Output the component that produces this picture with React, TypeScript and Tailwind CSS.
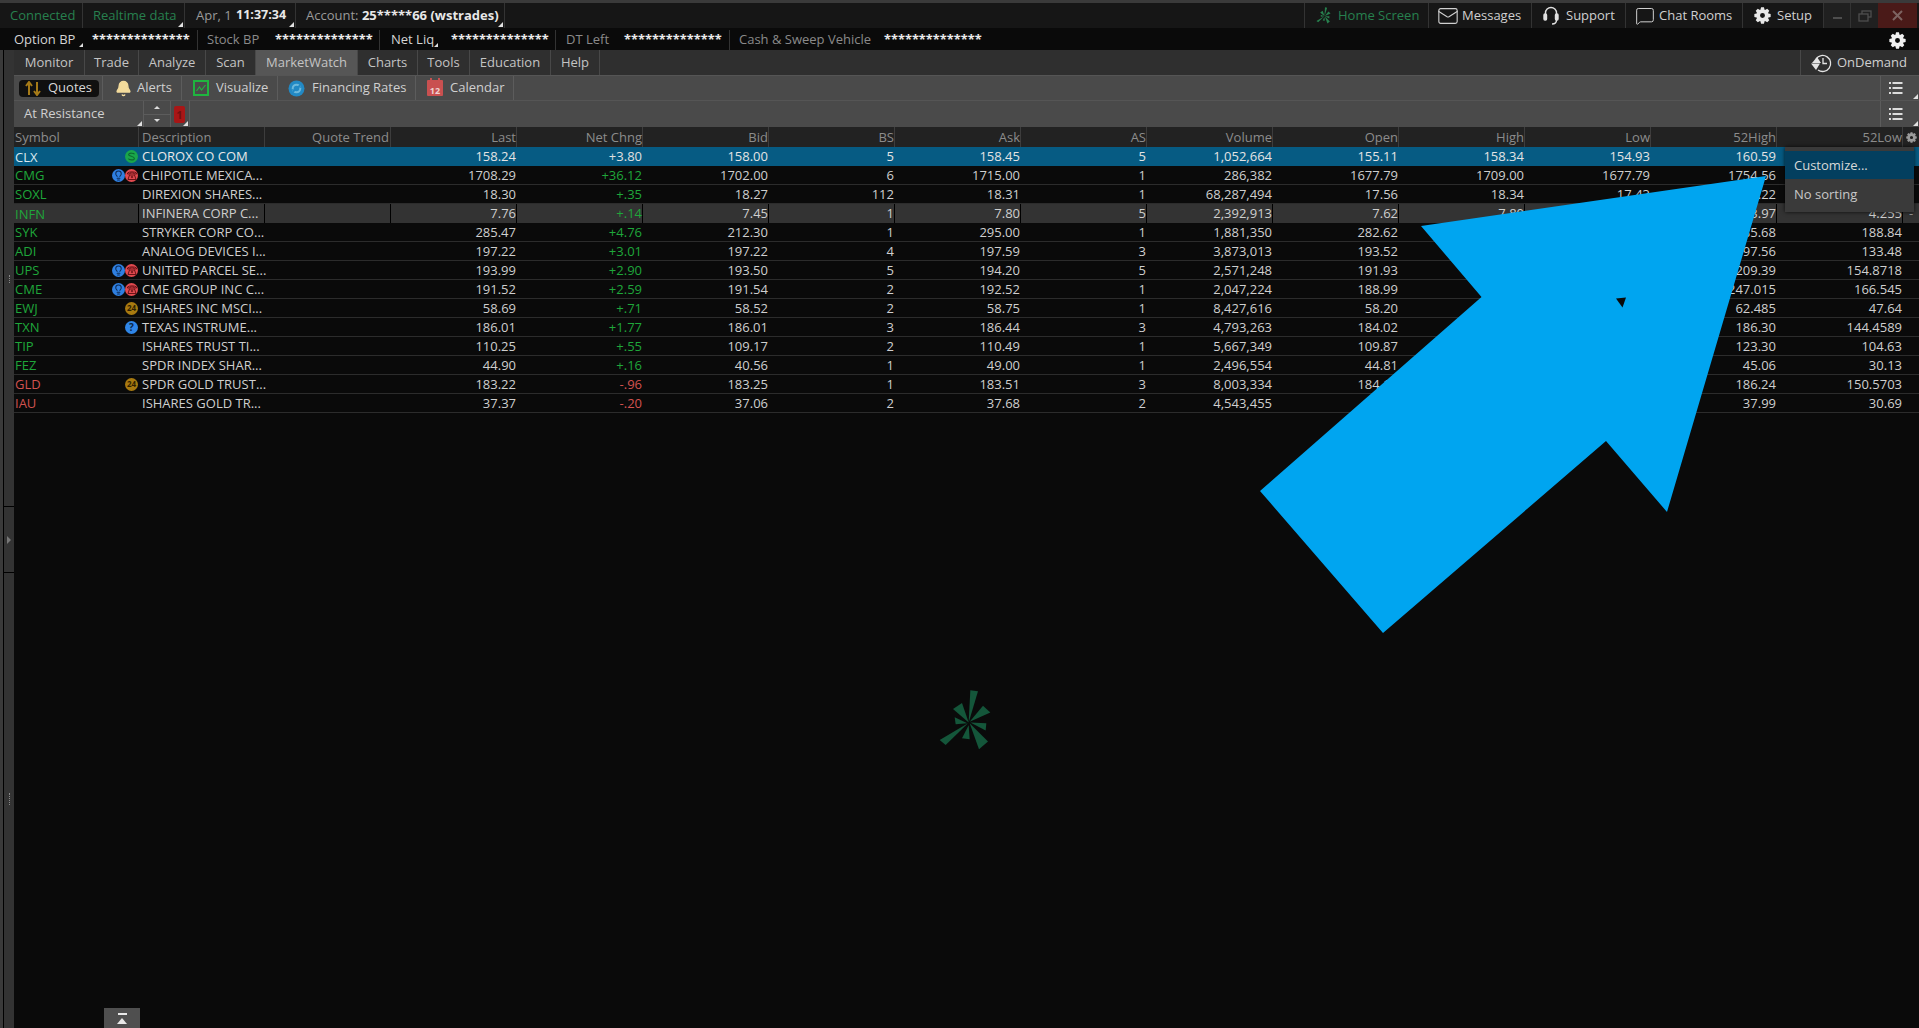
import React from "react";
import { Mail, MessageSquare, Bell, Lightbulb } from "lucide-react";

const Gear = ({ s = 16, c = "#e8e8e8" }: { s?: number; c?: string }) => (
  <svg width={s} height={s} viewBox="0 0 24 24" className="shrink-0">
    <g fill={c}>
      {[0, 45, 90, 135, 180, 225, 270, 315].map((a) => (
        <path key={a} d="M10 0.5h4l2 7h-8z" transform={`rotate(${a} 12 12)`} />
      ))}
    </g>
    <circle cx="12" cy="12" r="6" fill="none" stroke={c} strokeWidth="5" />
  </svg>
);

const Burst = ({ w, h, c }: { w: number; h: number; c: string }) => (
  <svg width={w} height={h} viewBox="55 58 162 185" preserveAspectRatio="none" className="shrink-0">
    <g fill={c}>
      <polygon points="147,158 152,62 175,65" />
      <polygon points="147,158 100,118 127,100" />
      <polygon points="143,160 105,142 108,163" />
      <polygon points="145,160 60,210 78,225" />
      <polygon points="147,166 127,205 150,208" />
      <polygon points="150,160 178,238 205,215" />
      <polygon points="152,158 200,160 198,182" />
      <polygon points="150,156 190,108 212,128" />
    </g>
  </svg>
);

const Corner = () => (
  <span className="absolute right-[1px] bottom-[1px] w-0 h-0 border-l-[5px] border-l-transparent border-b-[5px] border-b-[#e0e0e0]" />
);

const Stars = () => <span className="font-bold text-[#ececec] text-[12.8px]">**************</span>;

const ListBtn = () => (
  <div className="relative w-[39px] h-full border-l border-[#5c5c5c] flex items-center justify-center pr-[8px]">
    <svg width="14" height="14" viewBox="0 0 14 14" fill="#dcdcdc">
      <rect x="0" y="1" width="2" height="2" />
      <rect x="3.5" y="1" width="10" height="2" />
      <rect x="0" y="6" width="2" height="2" />
      <rect x="3.5" y="6" width="10" height="2" />
      <rect x="0" y="11" width="2" height="2" />
      <rect x="3.5" y="11" width="10" height="2" />
    </svg>
    <Corner />
  </div>
);

type Badge = "s" | "bulb" | "phone" | "24" | "q";
const Circle = ({ b }: { b: Badge }) => {
  if (b === "s")
    return (
      <span className="w-[13px] h-[13px] rounded-full bg-[#1aa64b] flex items-center justify-center">
        <svg width="9" height="9" viewBox="0 0 9 9" fill="none" stroke="#0c6a30" strokeWidth="1.1">
          <path d="M7.5 2.2C7 1 2 0.6 1.6 2.4c-.4 2 5.8 1.8 5.8 4 0 2-5.5 1.8-6 .3" />
        </svg>
      </span>
    );
  if (b === "bulb")
    return (
      <span className="w-[13px] h-[13px] rounded-full bg-[#2f7fe0] flex items-center justify-center">
        <Lightbulb size={11} color="#0c2c58" strokeWidth={2.2} />
      </span>
    );
  if (b === "phone")
    return (
      <span className="w-[13px] h-[13px] rounded-full bg-[#e24a4f] flex items-center justify-center">
        <svg width="10" height="9" viewBox="0 0 10 9" fill="none" stroke="#6a1216" strokeWidth="1">
          <path d="M0.5 3V2C2 0.5 8 0.5 9.5 2v1H7V2H3v1z" />
          <path d="M2.5 4h5l1.5 4.5H1z" />
          <circle cx="5" cy="6" r="0.8" />
        </svg>
      </span>
    );
  if (b === "24")
    return (
      <span className="w-[13px] h-[13px] rounded-full bg-[#a87a10] flex items-center justify-center text-[8px] leading-none text-[#2e2000] font-bold">
        24
      </span>
    );
  return (
    <span className="w-[13px] h-[13px] rounded-full bg-[#2f86e8] flex items-center justify-center text-[10px] leading-none text-[#0b2344] font-bold">
      ?
    </span>
  );
};

type Row = {
  sym: string;
  badges: Badge[];
  desc: string;
  v: string[];
  red?: boolean;
};

const rows: Row[] = [
  { sym: "CLX", badges: ["s"], desc: "CLOROX CO COM", v: ["158.24", "+3.80", "158.00", "5", "158.45", "5", "1,052,664", "155.11", "158.34", "154.93", "160.59", ""] },
  { sym: "CMG", badges: ["bulb", "phone"], desc: "CHIPOTLE MEXICA...", v: ["1708.29", "+36.12", "1702.00", "6", "1715.00", "1", "286,382", "1677.79", "1709.00", "1677.79", "1754.56", ""] },
  { sym: "SOXL", badges: [], desc: "DIREXION SHARES...", v: ["18.30", "+.35", "18.27", "112", "18.31", "1", "68,287,494", "17.56", "18.34", "17.43", "34.22", ""] },
  { sym: "INFN", badges: [], desc: "INFINERA CORP C...", v: ["7.76", "+.14", "7.45", "1", "7.80", "5", "2,392,913", "7.62", "7.80", "", "13.97", "4.255"] },
  { sym: "SYK", badges: [], desc: "STRYKER CORP CO...", v: ["285.47", "+4.76", "212.30", "1", "295.00", "1", "1,881,350", "282.62", "", "", "285.68", "188.84"] },
  { sym: "ADI", badges: [], desc: "ANALOG DEVICES I...", v: ["197.22", "+3.01", "197.22", "4", "197.59", "3", "3,873,013", "193.52", "", "", "197.56", "133.48"] },
  { sym: "UPS", badges: ["bulb", "phone"], desc: "UNITED PARCEL SE...", v: ["193.99", "+2.90", "193.50", "5", "194.20", "5", "2,571,248", "191.93", "", "", "209.39", "154.8718"] },
  { sym: "CME", badges: ["bulb", "phone"], desc: "CME GROUP INC C...", v: ["191.52", "+2.59", "191.54", "2", "192.52", "1", "2,047,224", "188.99", "", "", "247.015", "166.545"] },
  { sym: "EWJ", badges: ["24"], desc: "ISHARES INC MSCI...", v: ["58.69", "+.71", "58.52", "2", "58.75", "1", "8,427,616", "58.20", "", "", "62.485", "47.64"] },
  { sym: "TXN", badges: ["q"], desc: "TEXAS INSTRUME...", v: ["186.01", "+1.77", "186.01", "3", "186.44", "3", "4,793,263", "184.02", "", "", "186.30", "144.4589"] },
  { sym: "TIP", badges: [], desc: "ISHARES TRUST TI...", v: ["110.25", "+.55", "109.17", "2", "110.49", "1", "5,667,349", "109.87", "", "", "123.30", "104.63"] },
  { sym: "FEZ", badges: [], desc: "SPDR INDEX SHAR...", v: ["44.90", "+.16", "40.56", "1", "49.00", "1", "2,496,554", "44.81", "", "", "45.06", "30.13"] },
  { sym: "GLD", badges: ["24"], desc: "SPDR GOLD TRUST...", v: ["183.22", "-.96", "183.25", "1", "183.51", "3", "8,003,334", "184.10", "", "", "186.24", "150.5703"], red: true },
  { sym: "IAU", badges: [], desc: "ISHARES GOLD TR...", v: ["37.37", "-.20", "37.06", "2", "37.68", "2", "4,543,455", "", "", "", "37.99", "30.69"], red: true },
];

const headers = ["Last", "Net Chng", "Bid", "BS", "Ask", "AS", "Volume", "Open", "High", "Low", "52High", "52Low"];
const gridCols = "grid grid-cols-[125px_repeat(14,126px)_16px]";

const TopCell = ({ children, className = "" }: { children: React.ReactNode; className?: string }) => (
  <div className={`relative h-full flex items-center border-r border-[#333] ${className}`}>{children}</div>
);

const Tab = ({ t, w, active }: { t: string; w: string; active?: boolean }) => (
  <div className={`h-full flex items-center justify-center border-r border-[#484848] text-[#c4c4c4] ${w} ${active ? "bg-[#565656]" : ""}`}>{t}</div>
);

const SubTab = ({ icon, t, className }: { icon: React.ReactNode; t: string; className: string }) => (
  <div className={`h-full flex items-center border-r border-[#5c5c5c] text-[#d0d0d0] ${className}`}>
    {icon}
    <span>{t}</span>
  </div>
);

export default function App() {
  return (
    <div className="relative h-screen w-full overflow-hidden bg-[#0a0a0a] font-['Open_Sans',sans-serif] text-[13px] text-[#cfcfcf] flex flex-col whitespace-nowrap">
      {/* top strip */}
      <div className="h-[3px] shrink-0 bg-[#3a3a3a]" />
      <div className="h-[25px] shrink-0 bg-[#161616] flex items-center">
        <TopCell className="w-[83px] pl-[10px] text-[#27804e]">Connected</TopCell>
        <TopCell className="w-[102px] pl-[10px] text-[#27804e]">
          Realtime data
          <Corner />
        </TopCell>
        <TopCell className="w-[111px] pl-[11px] text-[#9a9a9a]">
          Apr, 1&nbsp;<b className="ml-[1px] text-[12.5px] text-[#e8e8e8]">11:37:34</b>
          <Corner />
        </TopCell>
        <TopCell className="w-[209px] pl-[10px] text-[#9a9a9a]">
          Account:&nbsp;<b className="text-[#e8e8e8]">25*****66 (wstrades)</b>
          <Corner />
        </TopCell>
        <div className="flex-1" />
        <div className="h-full flex items-center w-[125px] border-x border-[#333] pl-[11px] gap-[7px] text-[#27804e]">
          <Burst w={15} h={17} c="#27804e" />
          Home Screen
        </div>
        <div className="h-full flex items-center w-[103px] border-r border-[#333] pl-[8px] gap-[3px] text-[#d0d0d0]">
          <Mail size={22} strokeWidth={1.2} />
          Messages
        </div>
        <div className="h-full flex items-center w-[94px] border-r border-[#333] pl-[11px] gap-[7px] text-[#d0d0d0]">
          <svg width="16" height="20" viewBox="0 0 16 20" fill="none" stroke="#e0e0e0" strokeWidth="1.4">
            <path d="M2.5 10V7a5.5 5.5 0 0 1 11 0v3" />
            <rect x="1" y="8" width="2.5" height="6" rx="1" fill="#e0e0e0" />
            <rect x="12.5" y="8" width="2.5" height="6" rx="1" fill="#e0e0e0" />
            <path d="M13.5 14c0 3-2 4-4.5 4" />
          </svg>
          Support
        </div>
        <div className="h-full flex items-center w-[117px] border-r border-[#333] pl-[9px] gap-[4px] text-[#d0d0d0]">
          <MessageSquare size={20} strokeWidth={1.2} />
          Chat Rooms
        </div>
        <div className="h-full flex items-center w-[81px] border-r border-[#333] pl-[11px] gap-[6px] text-[#d0d0d0]">
          <Gear s={17} />
          Setup
        </div>
        <div className="h-full w-[27px] bg-[#202020] flex items-center justify-center border-r border-[#333]">
          <div className="w-[9px] h-[2px] bg-[#4e4e4e] mt-[5px]" />
        </div>
        <div className="h-full w-[27px] bg-[#202020] flex items-center justify-center">
          <svg width="14" height="12" viewBox="0 0 14 12" fill="none" stroke="#4e4e4e" strokeWidth="1.3">
            <rect x="4" y="1" width="9" height="6" />
            <rect x="1" y="4" width="9" height="7" fill="#202020" />
          </svg>
        </div>
        <div className="h-full w-[39px] bg-[#4a1a18] flex items-center justify-center">
          <svg width="11" height="11" viewBox="0 0 11 11" stroke="#7d6461" strokeWidth="2">
            <path d="M1 1l9 9M10 1l-9 9" />
          </svg>
        </div>
        <div className="w-[2px]" />
      </div>
      {/* balances */}
      <div className="h-[22px] shrink-0 bg-[#0a0a0a] flex items-center text-[#d4d4d4] pt-[2px]">
        <div className="relative h-full w-[198px] border-r border-[#333] flex items-center pl-[14px]">
          <span className="w-[78px]">Option BP</span>
          <Stars />
          <span className="absolute left-[79px] bottom-[3px] w-0 h-0 border-l-[4px] border-l-transparent border-b-[4px] border-b-[#e0e0e0]" />
        </div>
        <div className="h-full w-[182px] border-r border-[#333] flex items-center pl-[9px] text-[#8a8a8a]">
          <span className="w-[68px]">Stock BP</span>
          <Stars />
        </div>
        <div className="relative h-full w-[176px] border-r border-[#333] flex items-center pl-[11px]">
          <span className="w-[60px]">Net Liq</span>
          <Stars />
          <span className="absolute left-[54px] bottom-[3px] w-0 h-0 border-l-[4px] border-l-transparent border-b-[4px] border-b-[#e0e0e0]" />
        </div>
        <div className="h-full w-[174px] border-r border-[#333] flex items-center pl-[10px] text-[#8a8a8a]">
          <span className="w-[58px]">DT Left</span>
          <Stars />
        </div>
        <div className="h-full flex items-center pl-[9px] text-[#8a8a8a]">
          <span className="w-[145px]">Cash &amp; Sweep Vehicle</span>
          <Stars />
        </div>
        <div className="flex-1" />
        <div className="w-[44px] flex justify-center">
          <Gear s={17} c="#f0f0f0" />
        </div>
      </div>
      {/* body */}
      <div className="flex-1 min-h-0 flex">
        <div className="w-[14px] shrink-0 flex">
          <div className="w-[3px] bg-[#3a3a3a]" />
          <div className="w-[1px] bg-black" />
          <div className="w-[10px] bg-[#333] flex flex-col items-center">
            <div className="h-[225px] shrink-0" />
            <div className="h-[8px] w-[1px] shrink-0 border-l border-dotted border-[#888]" />
            <div className="h-[223px] shrink-0" />
            <div className="h-[1px] w-full shrink-0 bg-black" />
            <div className="h-[65px] shrink-0 flex items-center justify-center">
              <span className="w-0 h-0 border-y-[4px] border-y-transparent border-l-[4px] border-l-[#777]" />
            </div>
            <div className="h-[1px] w-full shrink-0 bg-black" />
            <div className="h-[220px] shrink-0" />
            <div className="h-[12px] w-[1px] shrink-0 border-l border-dotted border-[#888]" />
          </div>
        </div>
        <div className="flex-1 min-w-0 flex flex-col">
          <div className="h-[25px] shrink-0 bg-[#2f2f2f] flex items-center">
            <Tab t="Monitor" w="w-[71px]" />
            <Tab t="Trade" w="w-[54px]" />
            <Tab t="Analyze" w="w-[67px]" />
            <Tab t="Scan" w="w-[50px]" />
            <Tab t="MarketWatch" w="w-[102px]" active />
            <Tab t="Charts" w="w-[60px]" />
            <Tab t="Tools" w="w-[52px]" />
            <Tab t="Education" w="w-[81px]" />
            <Tab t="Help" w="w-[49px]" />
            <div className="flex-1" />
            <div className="h-full w-[117px] border-l border-[#484848] flex items-center pl-[10px] gap-[5px] text-[#d0d0d0]">
              <svg width="21" height="22" viewBox="0 0 21 22" fill="none" stroke="#e4e4e4" strokeWidth="1.3">
                <path d="M5 7a8 8 0 1 1 2 11" />
                <path d="M12 6v5.5h4" />
                <path d="M0 11.5h9l-4 6.5z" fill="#e4e4e4" stroke="none" />
                <path d="M6 5l4 6H1z" fill="#e4e4e4" stroke="none" />
              </svg>
              OnDemand
            </div>
            <div className="w-[2px]" />
          </div>
          <div className="h-[25px] shrink-0 bg-[#4a4a4a] border-t border-[#555] flex items-center">
            <div className="h-full w-[89px] flex items-center pl-[5px] border-r border-[#5c5c5c]">
              <div className="h-[17px] w-[80px] rounded-[4px] bg-[#101010] flex items-center pl-[6px] gap-[7px] text-[#d8d8d8]">
                <svg width="16" height="15" viewBox="0 0 16 15" fill="none" stroke="#a57a18" strokeWidth="2">
                  <path d="M4 14V2M1 5l3-4 3 4" />
                  <path d="M12 1v12M9 10l3 4 3-4" />
                </svg>
                Quotes
              </div>
            </div>
            <SubTab
              className="w-[79px] pl-[12px] gap-[5px]"
              t="Alerts"
              icon={<Bell size={17} color="#f4dc9c" fill="#f4dc9c" />}
            />
            <SubTab
              className="w-[96px] pl-[11px] gap-[7px]"
              t="Visualize"
              icon={
                <svg width="16" height="16" viewBox="0 0 16 16" fill="none">
                  <rect x="1" y="1" width="14" height="14" stroke="#1fb53f" strokeWidth="2" />
                  <path d="M3.5 11l3-4 2 3 4-5" stroke="#1fb53f" strokeWidth="1.1" />
                </svg>
              }
            />
            <SubTab
              className="w-[138px] pl-[10px] gap-[7px]"
              t="Financing Rates"
              icon={
                <svg width="17" height="17" viewBox="0 0 17 17" fill="none">
                  <circle cx="8.5" cy="8.5" r="8" fill="#2289c4" />
                  <circle cx="8.5" cy="8.5" r="3.8" stroke="#6cb8dc" strokeWidth="2" />
                  <path d="M12 4l1 4-4-1zM5 13l-1-4 4 1z" fill="#2289c4" />
                </svg>
              }
            />
            <SubTab
              className="w-[98px] pl-[11px] gap-[7px]"
              t="Calendar"
              icon={
                <span className="relative w-[16px] h-[16px] bg-[#c95050] rounded-[1px] flex items-end justify-center text-[9px] leading-[11px] font-bold text-[#f0d0d0]">
                  12
                  <span className="absolute left-[3px] top-[-2px] w-[2px] h-[4px] bg-[#c95050]" />
                  <span className="absolute right-[3px] top-[-2px] w-[2px] h-[4px] bg-[#c95050]" />
                </span>
              }
            />
            <div className="flex-1" />
            <ListBtn />
          </div>
          <div className="h-[27px] shrink-0 bg-[#4a4a4a] border-t border-[#555] flex items-center">
            <div className="relative h-full w-[130px] flex items-center pl-[10px] text-[#d0d0d0] border-r border-[#5c5c5c]">
              At Resistance
              <Corner />
            </div>
            <div className="h-full w-[27px] flex flex-col items-center justify-center border-r border-[#5c5c5c]">
              <div className="flex-1 w-full flex items-center justify-center border-b border-[#5c5c5c]">
                <span className="w-0 h-0 border-x-[3px] border-x-transparent border-b-[3px] border-b-[#ddd]" />
              </div>
              <div className="flex-1 flex items-center justify-center">
                <span className="w-0 h-0 border-x-[3px] border-x-transparent border-t-[3px] border-t-[#ddd]" />
              </div>
            </div>
            <div className="relative h-full w-[19px] flex items-center pl-[3px] border-r border-[#5c5c5c]">
              <span className="w-[11px] h-[17px] rounded-[2px] bg-[#a81616] text-[#701010] font-bold text-[11px] leading-[17px] text-center">1</span>
              <Corner />
            </div>
            <div className="flex-1" />
            <ListBtn />
          </div>
          {/* table */}
          <div className={`${gridCols} h-[20px] shrink-0 bg-[#222] text-[#8c8c8c]`}>
            <div className="border-r border-[#3d3d3d] pl-[1px] leading-[20px]">Symbol</div>
            <div className="border-r border-[#3d3d3d] pl-[3px] leading-[20px]">Description</div>
            <div className="border-r border-[#3d3d3d] pr-[1px] text-right leading-[20px]">Quote Trend</div>
            {headers.map((h) => (
              <div key={h} className="border-r border-[#3d3d3d] text-right leading-[20px]">
                {h}
              </div>
            ))}
            <div className="flex items-center justify-center">
              <Gear s={11} c="#9a9a9a" />
            </div>
          </div>
          {rows.map((r, i) => {
            const selected = i === 0;
            const hover = r.sym === "INFN";
            const bg = selected ? "bg-[#065b83]" : hover ? "bg-[#333]" : "border-b border-[#2c2c2c]";
            const sep = hover ? "border-r border-black" : "";
            return (
              <div key={r.sym} className={`${gridCols} h-[19px] shrink-0 leading-[18px] ${bg}`}>
                <div className={`flex items-center justify-between pl-[1px] pr-[1px] ${sep} ${selected ? "text-[#d8e8f0]" : r.red ? "text-[#d2524f]" : "text-[#1fa63a]"}`}>
                  <span>{r.sym}</span>
                  <span className="flex">
                    {r.badges.map((b) => (
                      <Circle key={b} b={b} />
                    ))}
                  </span>
                </div>
                <div className={`pl-[3px] ${sep} ${selected ? "text-[#e8e8e8]" : ""}`}>{r.desc}</div>
                <div className={sep} />
                {r.v.map((v, j) => (
                  <div
                    key={j}
                    className={`text-right ${hover ? "pr-[0px]" : "pr-[1px]"} ${sep} ${j === 1 ? (selected ? "text-[#e0e0e0]" : r.red ? "text-[#d2524f]" : "text-[#1fa63a]") : selected ? "text-[#e4e4e4]" : ""}`}
                  >
                    {v}
                  </div>
                ))}
                <div className="text-center text-[#999]">{hover ? "-" : ""}</div>
              </div>
            );
          })}
        </div>
      </div>
      {/* sort menu */}
      <div className="absolute left-[1785px] top-[147px] w-[129px] h-[65px] bg-[#3a3a3a] pt-[4px] shadow-[0_0_4px_rgba(0,0,0,0.8)]">
        <div className="h-[28px] bg-[#033f5f] flex items-center pl-[9px] pt-[2px] text-[#d8d8d8]">Customize...</div>
        <div className="h-[29px] flex items-center pl-[9px] pt-[2px] text-[#c8c8c8]">No sorting</div>
      </div>
      {/* annotation arrow */}
      <svg className="absolute left-0 top-0 pointer-events-none" width="1919" height="1028" viewBox="0 0 1919 1028">
        <polygon points="1766,176 1421,226 1481.5,297 1260,491 1383,633 1606,441 1667,512" fill="#00a5f0" />
        <polygon points="1616,298.5 1626,297.5 1622.5,307.5" fill="#0a0a0a" />
      </svg>
      {/* spinner */}
      <div className="absolute left-[938px] top-[689px]">
        <Burst w={54} h={62} c="#14563a" />
      </div>
      {/* collapse button */}
      <div className="absolute left-[104px] top-[1008px] w-[36px] h-[20px] bg-[#4f4f4f] flex flex-col items-center justify-center gap-[3px]">
        <div className="w-[9px] h-[2px] bg-[#e8e8e8]" />
        <span className="w-0 h-0 border-x-[5px] border-x-transparent border-b-[6px] border-b-[#e8e8e8]" />
      </div>
    </div>
  );
}
